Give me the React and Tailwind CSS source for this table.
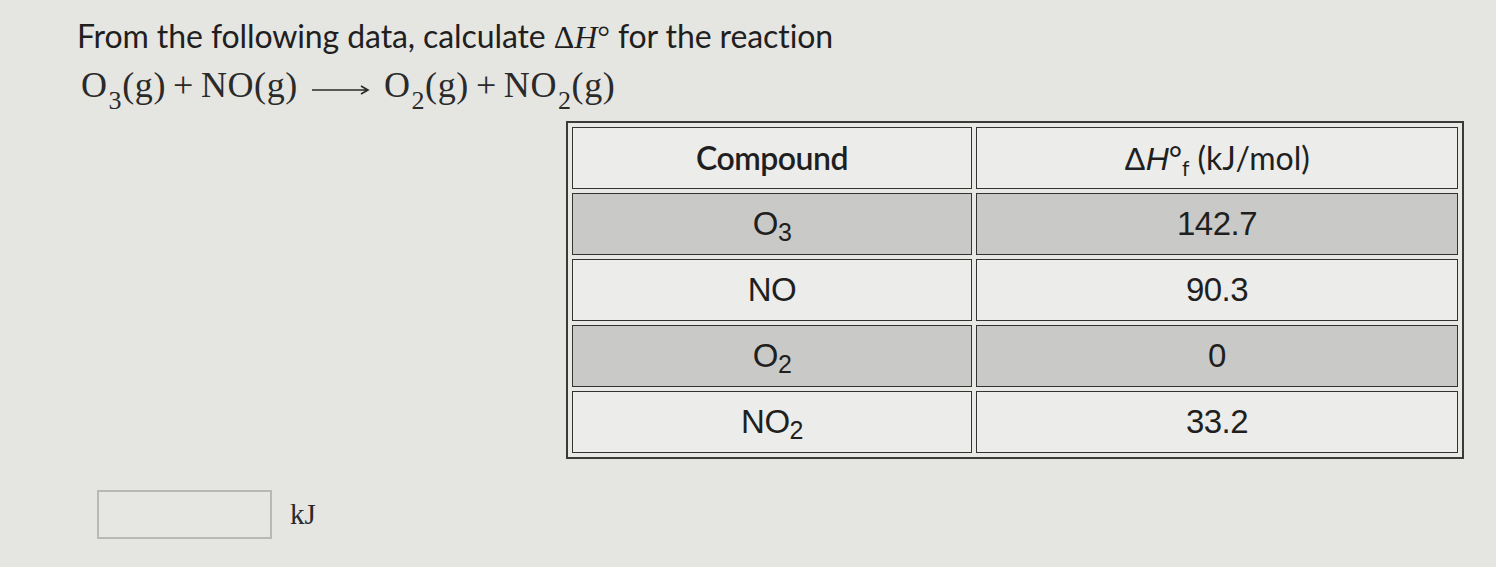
import React from 'react';

const rows = [
  { name: 'O', sub: '3', value: '142.7', shaded: true },
  { name: 'NO', sub: '', value: '90.3', shaded: false },
  { name: 'O', sub: '2', value: '0', shaded: true },
  { name: 'NO', sub: '2', value: '33.2', shaded: false },
];

function Sub({ children }) {
  return <sub className="text-[26px] relative top-[12px] ml-[1px]">{children}</sub>;
}

export default function App() {
  return (
    <div className="w-[1496px] h-[567px] overflow-hidden bg-[#e5e5e1] text-[#1f1f1f]">
      <div className="pl-[77px] pt-[16px]">
        <h1 className="text-[32px] leading-[40px] font-[Lato,sans-serif] tracking-[-0.1px]">
          From the following data, calculate <span className="font-['Liberation_Serif',serif]">Δ<i>H</i>°</span> for the reaction
        </h1>

        <div className="pl-[4px] mt-[6px] flex items-baseline gap-[7px] text-[36px] leading-[44px] tracking-[0.6px] font-['Liberation_Serif',serif] text-[#2a2a2a]">
          <span>O<Sub>3</Sub>(g)</span>
          <span>+</span>
          <span>NO(g)</span>
          <svg width="60" height="14" viewBox="0 0 60 14" className="mx-[6px] self-center mt-[10px]">
            <path d="M1 7 H56 M50 3 L57 7 L50 11" fill="none" stroke="#2a2a2a" strokeWidth="1.6" />
          </svg>
          <span>O<Sub>2</Sub>(g)</span>
          <span>+</span>
          <span>NO<Sub>2</Sub>(g)</span>
        </div>

        <table className="ml-[489px] mt-[14px] w-[898px] border-separate border-spacing-1 border-2 border-[#3a3a3a] bg-[#e8e8e5]">
          <thead>
            <tr className="h-[62px]">
              <th className="w-[400px] border border-[#333] bg-[#ececea] text-[32px] font-semibold font-[Lato,sans-serif] tracking-[-0.5px]">Compound</th>
              <th className="border border-[#333] bg-[#ececea] text-[32px] font-normal font-[Lato,sans-serif]">
                <span className="font-['Liberation_Sans',sans-serif]">Δ<i>H</i></span>°<sub className="text-[21px] relative top-[6px]">f</sub> (kJ/mol)
              </th>
            </tr>
          </thead>
          <tbody>
            {rows.map((r) => (
              <tr key={r.name + r.sub} className="h-[62px]">
                <td className={`border border-[#333] text-center text-[33px] font-['Liberation_Sans',sans-serif] tracking-[-0.5px] ${r.shaded ? 'bg-[#c9c9c7]' : 'bg-[#ececea]'}`}>
                  {r.name}
                  {r.sub && <sub className="text-[25px] relative top-[6px]">{r.sub}</sub>}
                </td>
                <td className={`border border-[#333] text-center text-[33px] font-['Liberation_Sans',sans-serif] tracking-[-0.5px] ${r.shaded ? 'bg-[#c9c9c7]' : 'bg-[#ececea]'}`}>
                  {r.value}
                </td>
              </tr>
            ))}
          </tbody>
        </table>

        <div className="mt-[31px] ml-[20px] flex items-center gap-[18px]">
          <input type="text" className="w-[175px] h-[49px] border-2 border-[#b8b8b6] bg-[#e6e6e3] outline-none" />
          <span className="text-[29px] font-['Liberation_Serif',serif] text-[#2a2a2a]">kJ</span>
        </div>
      </div>
    </div>
  );
}
